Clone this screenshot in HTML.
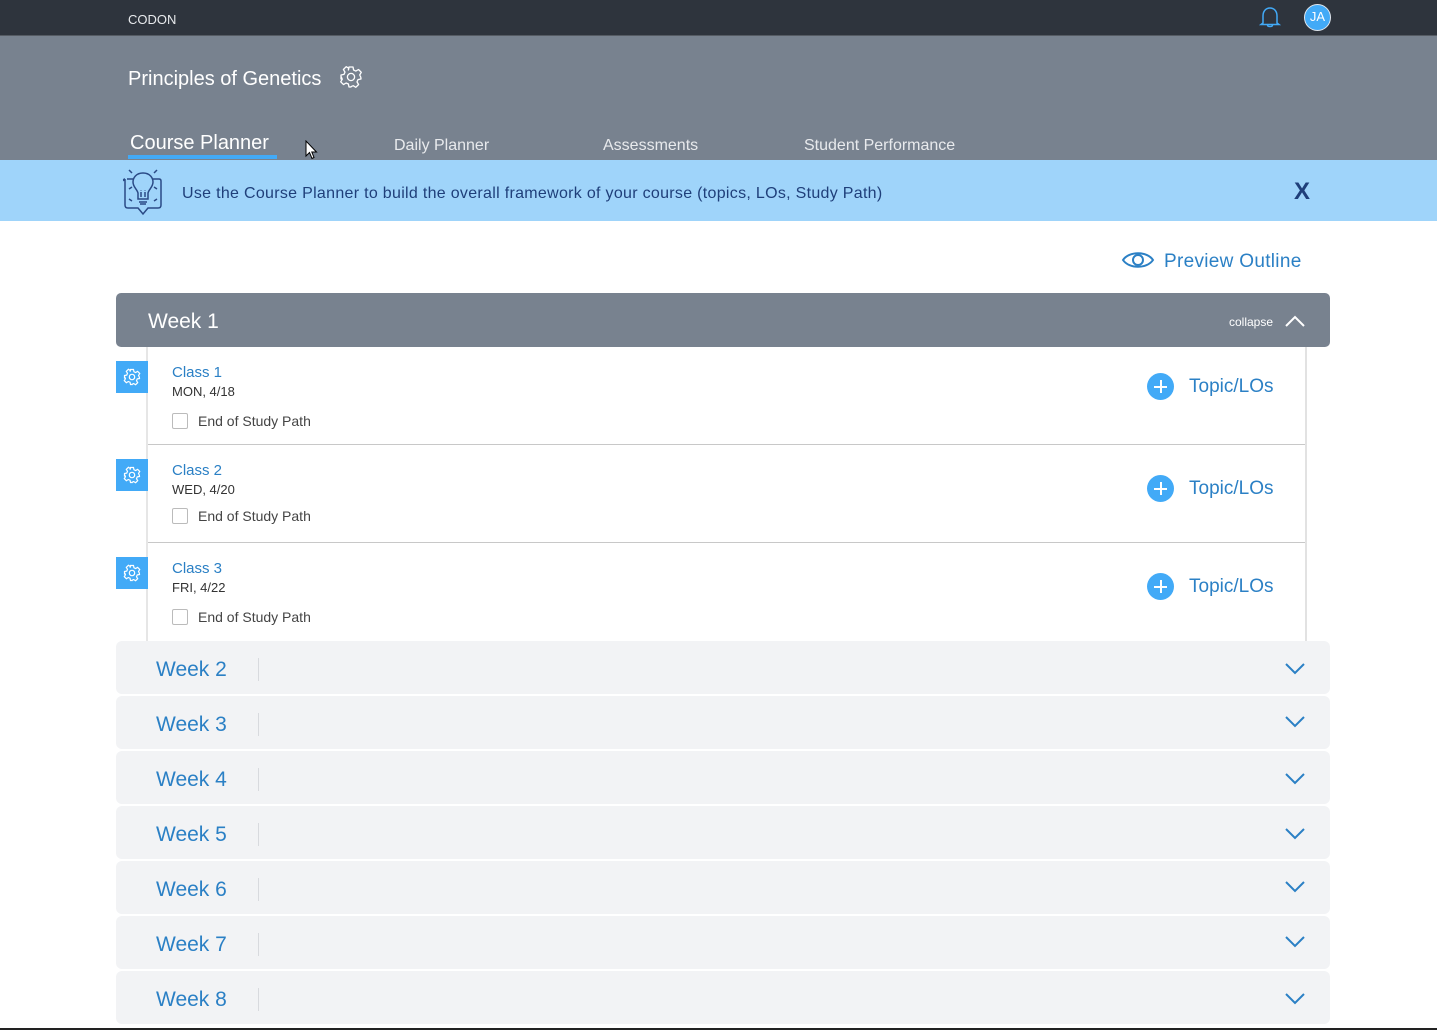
<!DOCTYPE html>
<html><head><meta charset="utf-8"><style>
*{box-sizing:border-box;margin:0;padding:0}
body{width:1437px;height:1030px;overflow:hidden;background:#fff;font-family:"Liberation Sans",sans-serif;position:relative}
.abs{position:absolute}
.top{left:0;top:0;width:1437px;height:36px;background:#2e343d;border-bottom:1px solid #555b63}
.hdr{left:0;top:36px;width:1437px;height:124px;background:#78828f}
.banner{left:0;top:160px;width:1437px;height:61px;background:#9fd4fa}
.blue{color:#2b80c5}
.wk{left:116px;width:1214px;height:53px;background:#f2f3f5;border-radius:6px}
.wk span{position:absolute;left:40px;top:17px;font-size:21px;color:#2b80c5}
.wk i{position:absolute;left:142px;top:17px;width:1px;height:23px;background:#d8dade}
.wk svg{position:absolute;left:1168px;top:20px}
.cls{left:148px;width:1157px;height:98px;background:#fff;border-bottom:1px solid #c8c8c8}
.gear{left:116px;width:32px;height:32px;background:#42aaf7}
.gear svg{position:absolute;left:7px;top:7px}
.ctitle{position:absolute;left:24px;top:17px;font-size:15px;color:#2b80c5}
.cdate{position:absolute;left:24px;top:37px;font-size:13px;color:#333}
.cb{position:absolute;left:24px;width:16px;height:16px;border:1px solid #bbb;border-radius:2px;background:#fff}
.cbl{position:absolute;left:50px;font-size:14px;color:#444}
.add{position:absolute;left:999px;width:27px;height:27px;border-radius:50%;background:#42aaf7;color:#fff}
.add:before{content:"";position:absolute;left:7px;top:12.5px;width:13px;height:2px;background:#fff}
.add:after{content:"";position:absolute;left:12.5px;top:7px;width:2px;height:13px;background:#fff}
.tl{position:absolute;left:1041px;font-size:19px;color:#2b80c5}
</style></head><body>
<div class="abs top"></div>
<div class="abs" style="left:128px;top:12px;font-size:13px;color:#e8eaed">CODON</div>
<svg class="abs" style="left:1259px;top:5px" width="22" height="24" viewBox="0 0 22 24"><path d="M4 18 L4 11 C4 6 7 3 11 3 C15 3 18 6 18 11 L18 18 L20 19.5 L2 19.5 Z M8.5 20 C8.5 22 13.5 22 13.5 20" fill="none" stroke="#42aaf7" stroke-width="1.5"/></svg>
<div class="abs" style="left:1304px;top:4px;width:27px;height:27px;border-radius:50%;background:#42aaf7;border:1.5px solid #dfe6ee;color:#fff;font-size:13px;text-align:center;line-height:23px">JA</div>
<div class="abs hdr"></div>
<div class="abs" style="left:128px;top:68px;font-size:20px;color:#fff">Principles of Genetics</div>
<svg class="abs" style="left:339px;top:65px" width="24" height="24" viewBox="0 0 24 24"><path d="M10 2h4l.6 3 2.2 1.1 2.7-1.6 2.8 2.8-1.6 2.7L21.8 12.2 22 14l-3 .6-1 2.3 1.6 2.6-2.8 2.8-2.6-1.6-2.3 1L12 22h-2l-.6-3-2.3-1-2.6 1.6-2.8-2.8 1.6-2.6-1-2.3L2 14v-4l3-.6 1-2.3-1.6-2.6 2.8-2.8 2.6 1.6L9.4 5z" fill="none" stroke="#fff" stroke-width="1.3" stroke-linejoin="round"/><circle cx="12" cy="12" r="3.6" fill="none" stroke="#fff" stroke-width="1.3"/></svg>
<div class="abs" style="left:130px;top:132px;font-size:20px;color:#fff">Course Planner</div>
<div class="abs" style="left:128px;top:155px;width:149px;height:4px;background:#42aaf7"></div>
<div class="abs" style="left:394px;top:137px;font-size:16px;color:#e8eaed">Daily Planner</div>
<div class="abs" style="left:603px;top:137px;font-size:16px;color:#e8eaed">Assessments</div>
<div class="abs" style="left:804px;top:137px;font-size:16px;color:#e8eaed">Student Performance</div>
<svg class="abs" style="left:305px;top:140px" width="14" height="22" viewBox="0 0 14 22"><path d="M1 1 L1 16 L4.5 12.5 L7 18.5 L9 17.5 L6.8 12 L11.5 12 Z" fill="#fff" stroke="#000" stroke-width="1"/></svg>
<div class="abs banner"></div>
<svg class="abs" style="left:121px;top:167px" width="44" height="50" viewBox="0 0 44 50"><g fill="none" stroke="#2a4a86" stroke-width="1.5"><path d="M6 12 h6 M32 12 h6 M3 14 Q2 12 4 12 M4 12 L4 38 Q4 41 7 41 L17 41 L22 47 L27 41 L37 41 Q40 41 40 38 L40 14 Q40 12 38 12"/><path d="M22 6 C15 6 12 11 12 15 C12 20 16 22 17 26 L17 32 L27 32 L27 26 C28 22 32 20 32 15 C32 11 29 6 22 6 Z"/><path d="M18 35 h8 M19 37 h6 M20 25 v5 M24 25 v5 M20 23 v0.5 M24 23 v0.5 M8 3 l3 3 M36 3 l-3 3 M8 22 l3 -2 M36 22 l-3 -2 M8 32 l3 2 M36 32 l-3 2"/></g></svg>
<div class="abs" style="left:182px;top:185px;font-size:16px;color:#1f3f7a;letter-spacing:0.3px">Use the Course Planner to build the overall framework of your course (topics, LOs, Study Path)</div>
<div class="abs" style="left:1294px;top:178px;font-size:24px;font-weight:bold;color:#1f3f7a">X</div>
<svg class="abs" style="left:1121px;top:248px" width="34" height="24" viewBox="0 0 34 24"><path d="M2 12 C8 3 26 3 32 12 C26 21 8 21 2 12 Z" fill="none" stroke="#2b80c5" stroke-width="2"/><circle cx="17" cy="12" r="5" fill="none" stroke="#2b80c5" stroke-width="2"/></svg>
<div class="abs blue" style="left:1164px;top:251px;font-size:19px;letter-spacing:0.3px">Preview Outline</div>
<div class="abs" style="left:116px;top:293px;width:1214px;height:54px;background:#78828f;border-radius:5px"></div>
<div class="abs" style="left:148px;top:310px;font-size:21px;color:#fff">Week 1</div>
<div class="abs" style="left:1229px;top:315px;font-size:12px;color:#fff">collapse</div>
<svg class="abs" style="left:1284px;top:314px" width="22" height="14" viewBox="0 0 22 14"><path d="M2 12 L11 3 L20 12" fill="none" stroke="#fff" stroke-width="2"/></svg>
<div class="abs" style="left:146px;top:347px;width:3px;height:294px;background:#e6e6e6"></div>
<div class="abs" style="left:1305px;top:347px;width:2px;height:294px;background:#e2e2e2"></div>

<div class="abs cls" style="top:347px"><div class="ctitle">Class 1</div><div class="cdate">MON, 4/18</div><div class="cb" style="top:66px"></div><div class="cbl" style="top:66px">End of Study Path</div><div class="add" style="top:26px"></div><div class="tl" style="top:29px">Topic/LOs</div></div>
<div class="abs cls" style="top:445px"><div class="ctitle">Class 2</div><div class="cdate">WED, 4/20</div><div class="cb" style="top:63px"></div><div class="cbl" style="top:63px">End of Study Path</div><div class="add" style="top:30px"></div><div class="tl" style="top:33px">Topic/LOs</div></div>
<div class="abs cls" style="top:543px;border-bottom:none"><div class="ctitle">Class 3</div><div class="cdate">FRI, 4/22</div><div class="cb" style="top:66px"></div><div class="cbl" style="top:66px">End of Study Path</div><div class="add" style="top:30px"></div><div class="tl" style="top:33px">Topic/LOs</div></div>

<div class="abs gear" style="top:361px"><svg width="18" height="18" viewBox="0 0 24 24"><path d="M10 2h4l.6 3 2.2 1.1 2.7-1.6 2.8 2.8-1.6 2.7L21.8 12.2 22 14l-3 .6-1 2.3 1.6 2.6-2.8 2.8-2.6-1.6-2.3 1L12 22h-2l-.6-3-2.3-1-2.6 1.6-2.8-2.8 1.6-2.6-1-2.3L2 14v-4l3-.6 1-2.3-1.6-2.6 2.8-2.8 2.6 1.6L9.4 5z" fill="none" stroke="#fff" stroke-width="1.6"/><circle cx="12" cy="12" r="3.6" fill="none" stroke="#fff" stroke-width="1.6"/></svg></div>
<div class="abs gear" style="top:459px"><svg width="18" height="18" viewBox="0 0 24 24"><path d="M10 2h4l.6 3 2.2 1.1 2.7-1.6 2.8 2.8-1.6 2.7L21.8 12.2 22 14l-3 .6-1 2.3 1.6 2.6-2.8 2.8-2.6-1.6-2.3 1L12 22h-2l-.6-3-2.3-1-2.6 1.6-2.8-2.8 1.6-2.6-1-2.3L2 14v-4l3-.6 1-2.3-1.6-2.6 2.8-2.8 2.6 1.6L9.4 5z" fill="none" stroke="#fff" stroke-width="1.6"/><circle cx="12" cy="12" r="3.6" fill="none" stroke="#fff" stroke-width="1.6"/></svg></div>
<div class="abs gear" style="top:557px"><svg width="18" height="18" viewBox="0 0 24 24"><path d="M10 2h4l.6 3 2.2 1.1 2.7-1.6 2.8 2.8-1.6 2.7L21.8 12.2 22 14l-3 .6-1 2.3 1.6 2.6-2.8 2.8-2.6-1.6-2.3 1L12 22h-2l-.6-3-2.3-1-2.6 1.6-2.8-2.8 1.6-2.6-1-2.3L2 14v-4l3-.6 1-2.3-1.6-2.6 2.8-2.8 2.6 1.6L9.4 5z" fill="none" stroke="#fff" stroke-width="1.6"/><circle cx="12" cy="12" r="3.6" fill="none" stroke="#fff" stroke-width="1.6"/></svg></div>

<div class="abs wk" style="top:641px"><span>Week 2</span><i></i><svg width="22" height="14" viewBox="0 0 22 14"><path d="M2 3 L11 12 L20 3" fill="none" stroke="#2b80c5" stroke-width="2"/></svg></div>
<div class="abs wk" style="top:696px"><span>Week 3</span><i></i><svg width="22" height="14" viewBox="0 0 22 14" style="top:18px"><path d="M2 3 L11 12 L20 3" fill="none" stroke="#2b80c5" stroke-width="2"/></svg></div>
<div class="abs wk" style="top:751px"><span>Week 4</span><i></i><svg width="22" height="14" viewBox="0 0 22 14"><path d="M2 3 L11 12 L20 3" fill="none" stroke="#2b80c5" stroke-width="2"/></svg></div>
<div class="abs wk" style="top:806px"><span>Week 5</span><i></i><svg width="22" height="14" viewBox="0 0 22 14"><path d="M2 3 L11 12 L20 3" fill="none" stroke="#2b80c5" stroke-width="2"/></svg></div>
<div class="abs wk" style="top:861px"><span>Week 6</span><i></i><svg width="22" height="14" viewBox="0 0 22 14" style="top:18px"><path d="M2 3 L11 12 L20 3" fill="none" stroke="#2b80c5" stroke-width="2"/></svg></div>
<div class="abs wk" style="top:916px"><span>Week 7</span><i></i><svg width="22" height="14" viewBox="0 0 22 14" style="top:18px"><path d="M2 3 L11 12 L20 3" fill="none" stroke="#2b80c5" stroke-width="2"/></svg></div>
<div class="abs wk" style="top:971px"><span>Week 8</span><i></i><svg width="22" height="14" viewBox="0 0 22 14"><path d="M2 3 L11 12 L20 3" fill="none" stroke="#2b80c5" stroke-width="2"/></svg></div>
<div class="abs" style="left:0;top:1028px;width:1437px;height:2px;background:#222"></div>
</body></html>
